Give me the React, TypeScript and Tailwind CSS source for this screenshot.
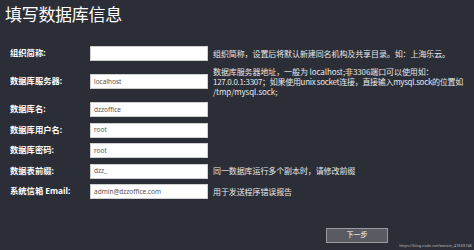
import React from "react";

const rows: { label: string; value: string; desc?: string[] }[] = [
  { label: "组织简称:", value: "", desc: ["组织简称，设置后将默认新建同名机构及共享目录。如：上海乐云。"] },
  {
    label: "数据库服务器:",
    value: "localhost",
    desc: [
      "数据库服务器地址，一般为 localhost;非3306端口可以使用如：",
      "127.0.0.1:3307；如果使用unix socket连接，直接输入mysql.sock的位置如",
      "/tmp/mysql.sock;",
    ],
  },
  { label: "数据库名:", value: "dzzoffice" },
  { label: "数据库用户名:", value: "root" },
  { label: "数据库密码:", value: "root" },
  { label: "数据表前缀:", value: "dzz_", desc: ["同一数据库运行多个副本时，请修改前缀"] },
  { label: "系统信箱 Email:", value: "admin@dzzoffice.com", desc: ["用于发送程序错误报告"] },
];

export default function App() {
  return (
    <div
      className="relative flex h-[250px] w-[474px] flex-col overflow-hidden bg-[#2b2e37] text-white"
      style={{ fontFamily: '"Noto Sans", "Noto Sans CJK SC", sans-serif' }}
    >
      <h1 className="ml-[5px] mt-[3px] text-[17px] leading-[24px] tracking-[-0.3px]">填写数据库信息</h1>

      <div className="mt-[19px] flex flex-col gap-[5.5px]">
        {rows.map((r) => (
          <div key={r.label} className="flex min-h-[15px] items-center">
            <div className="w-[90px] shrink-0 pl-[10px] text-[8.3px] font-bold leading-none">{r.label}</div>
            <div className="flex h-[15px] w-[118px] shrink-0 items-center border border-[#cfcfcf] bg-white pl-[3px] text-[6.5px] text-[#555]">
              {r.value}
            </div>
            {r.desc && (
              <div
                className="ml-[5px] min-w-0 text-[8px] leading-[10px] tracking-[-0.1px] text-[#e8e8e8]"
                style={{ fontFamily: '"Noto Sans CJK SC", sans-serif' }}
              >
                {r.desc.map((d) => (
                  <div
                    key={d}
                    className={d.startsWith("127") ? "h-[10px] whitespace-nowrap tracking-[-0.3px]" : "h-[10px] whitespace-nowrap"}
                  >
                    {d}
                  </div>
                ))}
              </div>
            )}
          </div>
        ))}
      </div>

      <div className="mt-auto mb-[7px] flex justify-end pr-[86px]">
        <button className="flex h-[15px] w-[62px] items-center justify-center border border-[#9a9ca2] bg-[#585b62] text-[7px] text-white">
          下一步
        </button>
      </div>

      <div className="absolute bottom-[2px] right-[2px] text-[4px] leading-none text-[#bbb]">
        https://blog.csdn.net/weixin_41633746
      </div>
    </div>
  );
}
